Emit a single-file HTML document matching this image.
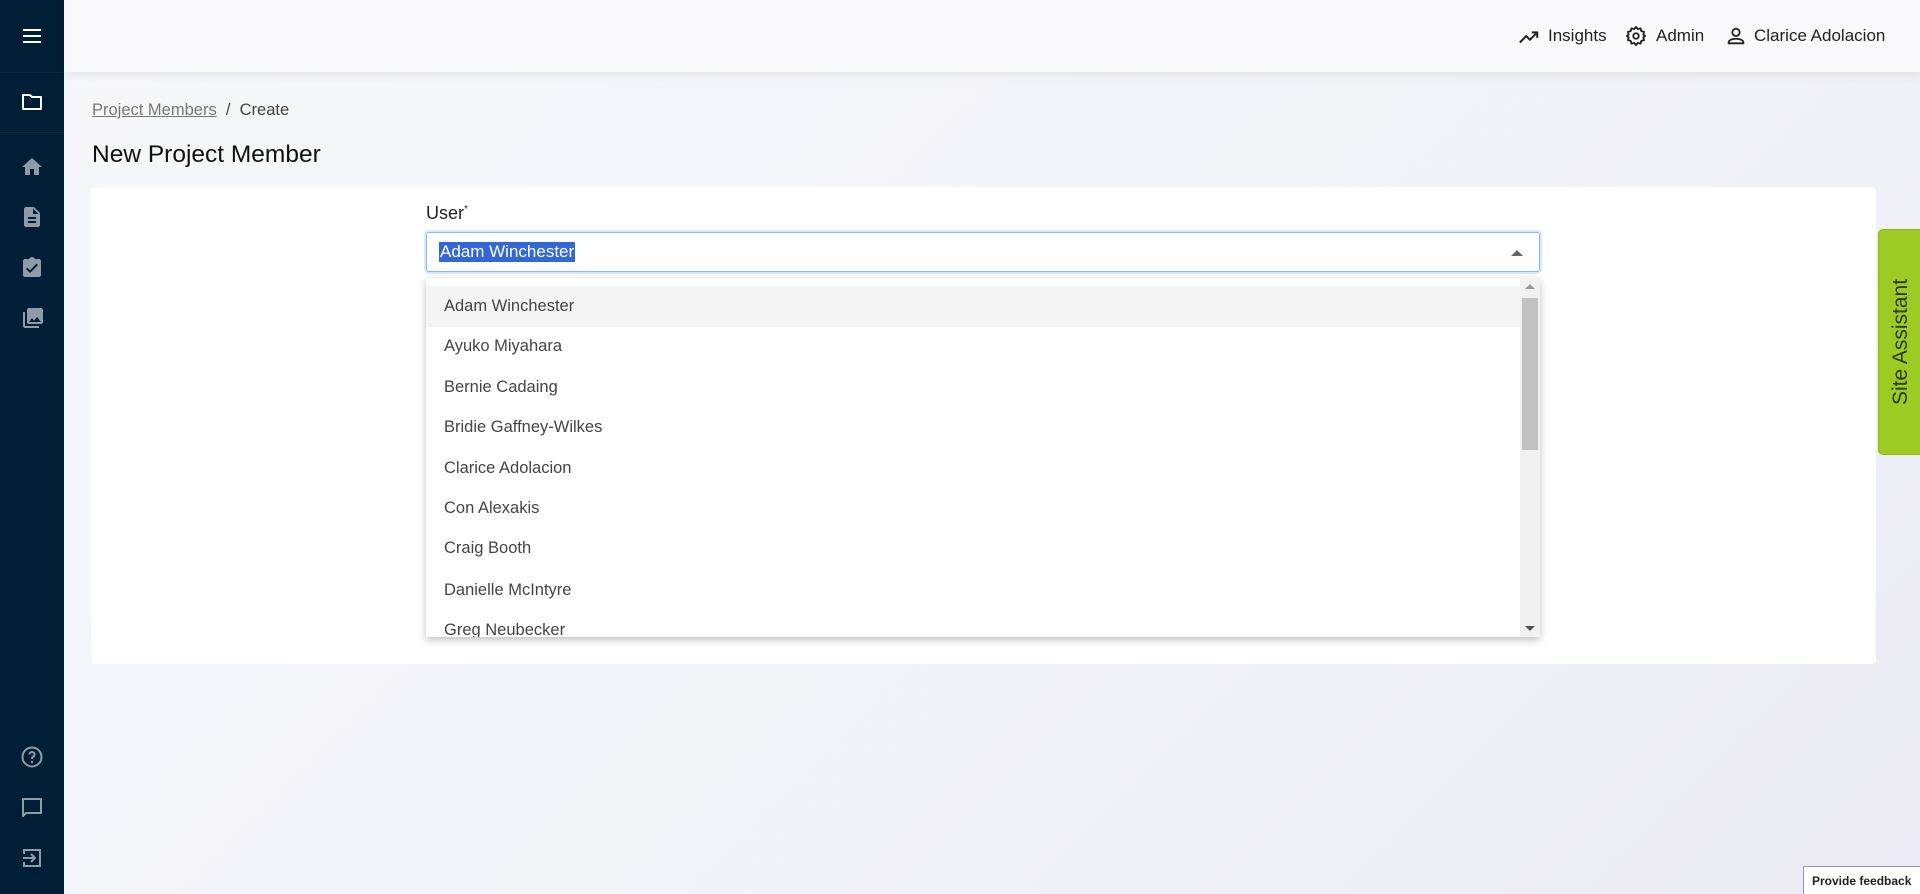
<!DOCTYPE html>
<html><head><meta charset="utf-8"><style>
*{box-sizing:border-box;margin:0;padding:0}
body{width:1920px;height:894px;overflow:hidden;font-family:"Liberation Sans",sans-serif;background:linear-gradient(135deg,#f6f7fb 0%,#f2f3f8 60%,#ebeaf4 100%);position:relative}
.side{position:absolute;left:0;top:0;width:64px;height:894px;background:#001e36}
.side .sep{position:absolute;left:0;width:64px;height:1px;background:#0b2a42}
.ic{position:absolute;left:20px}
.hdr{position:absolute;left:64px;top:0;right:0;height:72px;background:#f9f9fc;box-shadow:0 3px 10px rgba(0,0,0,.07)}
.hi{position:absolute;top:26px;font-size:17px;color:#222}
.crumb{position:absolute;left:92px;top:101px;font-size:16.5px;color:#444}
.crumb u{color:#777}
h1{position:absolute;left:92px;top:141px;font-size:24.5px;font-weight:normal;color:#111}
.card{position:absolute;left:91px;top:187px;width:1785px;height:477px;background:#fff;border-radius:4px}
.lbl{position:absolute;left:426px;top:203px;font-size:18px;color:#222}
.inp{position:absolute;left:426px;top:232px;width:1114px;height:40px;border:1px solid #86b7fe;border-radius:3px;box-shadow:0 0 0 2px #d8e8fe}
.inp span{position:absolute;left:12px;top:9px;background:#3367d6;color:#fff;font-size:17px;padding:0 1px;line-height:20px}
.inp i{position:absolute;right:16px;top:17px;border-left:6px solid transparent;border-right:6px solid transparent;border-bottom:6px solid #666}
.dd{position:absolute;left:426px;top:278px;width:1114px;height:359px;background:#fff;box-shadow:0 3px 8px rgba(0,0,0,.25);overflow:hidden}
.row{position:absolute;left:0;width:1094px;height:41px;font-size:16.5px;color:#444;padding-left:18px;line-height:41px}
.sb{position:absolute;right:0;top:0;width:20px;height:359px;background:#f1f1f1}
.sa{position:absolute;left:1878px;top:229px;width:46px;height:226px;background:#9ecb23;border-radius:5px 0 0 5px;border:1px solid #8cb81a}
.sa span{position:absolute;left:50%;top:50%;transform:translate(-50%,-50%) rotate(-90deg);font-size:21px;color:#2b3a10;white-space:nowrap}
.fb{position:absolute;left:1803px;top:866px;width:117px;height:28px;background:#fff;border:1px solid #999;border-bottom:none;border-right:none;font-size:12px;color:#222;padding:7px 0 0 8px;font-weight:bold}
</style></head><body>
<div class="side">
<div class="sep" style="top:72px"></div><div class="sep" style="top:132px"></div>
<svg class="ic" style="top:24px" width="24" height="24" viewBox="0 0 24 24"><path d="M3 6h18M3 12h18M3 18h18" stroke="#fff" stroke-width="2"/></svg>
<svg class="ic" style="top:90px" width="24" height="24" viewBox="0 0 24 24"><path d="M3 5h7l2 2h9v12H3z" fill="none" stroke="#fff" stroke-width="2" stroke-linejoin="round"/></svg>
<svg class="ic" style="top:155px" width="24" height="24" viewBox="0 0 24 24"><path d="M10 20v-6h4v6h5v-8h3L12 3 2 12h3v8z" fill="#8f9ca8"/></svg>
<svg class="ic" style="top:205px" width="24" height="24" viewBox="0 0 24 24"><path d="M14 2H6c-1 0-2 1-2 2v16c0 1 1 2 2 2h12c1 0 2-1 2-2V8zm2 16H8v-2h8zm0-4H8v-2h8zm-3-5V3.5L18.5 9z" fill="#8f9ca8"/></svg>
<svg class="ic" style="top:256px" width="24" height="24" viewBox="0 0 24 24"><path d="M19 3h-4.2C14.4 1.8 13.3 1 12 1s-2.4.8-2.8 2H5c-1.1 0-2 .9-2 2v14c0 1.1.9 2 2 2h14c1.1 0 2-.9 2-2V5c0-1.1-.9-2-2-2zm-9 14-4-4 1.4-1.4 2.6 2.6 6.6-6.6L18 9z" fill="#8f9ca8"/></svg>
<svg class="ic" style="top:306px" width="26" height="24" viewBox="0 0 24 24"><path d="M22 16V4c0-1.1-.9-2-2-2H8c-1.1 0-2 .9-2 2v12c0 1.1.9 2 2 2h12c1.1 0 2-.9 2-2zm-11-4 2 2.7 3-3.7 4 5H8zM2 6v14c0 1.1.9 2 2 2h14v-2H4V6z" fill="#8f9ca8"/></svg>
<svg class="ic" style="top:745px" width="24" height="24" viewBox="0 0 24 24"><circle cx="12" cy="12" r="9.5" fill="none" stroke="#8f9ca8" stroke-width="2"/><path d="M9.5 9.5a2.5 2.5 0 1 1 3.5 2.3c-.7.4-1 .9-1 1.7v.5" fill="none" stroke="#8f9ca8" stroke-width="2"/><circle cx="12" cy="17" r="1.2" fill="#8f9ca8"/></svg>
<svg class="ic" style="top:796px" width="24" height="24" viewBox="0 0 24 24"><path d="M3 3h18v14H6l-3 3z" fill="none" stroke="#8f9ca8" stroke-width="2" stroke-linejoin="round"/></svg>
<svg class="ic" style="top:846px" width="24" height="24" viewBox="0 0 24 24"><path d="M4 8V4h16v16H4v-4M3 12h12M11 8l4 4-4 4" fill="none" stroke="#8f9ca8" stroke-width="2"/></svg>
</div>
<div class="hdr">
<svg style="position:absolute;left:1454px;top:26px" width="22" height="22" viewBox="0 0 24 24"><path d="M2 18l7-7 4 4 8-8M15 7h6v6" fill="none" stroke="#222" stroke-width="2.2"/></svg>
<div class="hi" style="left:1484px">Insights</div>
<svg style="position:absolute;left:1561px;top:25px" width="22" height="22" viewBox="0 0 24 24"><circle cx="12" cy="12" r="3" fill="none" stroke="#222" stroke-width="2"/><path d="M12 2l2 2.5 3-.8.8 3 3 .8-.8 3L22 12l-2 1.5.8 3-3 .8-.8 3-3-.8L12 22l-2-2.5-3 .8-.8-3-3-.8.8-3L2 12l2-1.5-.8-3 3-.8.8-3 3 .8z" fill="none" stroke="#222" stroke-width="2" stroke-linejoin="round"/></svg>
<div class="hi" style="left:1592px">Admin</div>
<svg style="position:absolute;left:1661px;top:25px" width="22" height="22" viewBox="0 0 24 24"><circle cx="12" cy="8" r="4" fill="none" stroke="#222" stroke-width="2"/><path d="M4 20v-1c0-2.5 4-4 8-4s8 1.5 8 4v1z" fill="none" stroke="#222" stroke-width="2"/></svg>
<div class="hi" style="left:1690px">Clarice Adolacion</div>
</div>
<div class="crumb"><u>Project Members</u> &nbsp;/&nbsp; Create</div>
<h1>New Project Member</h1>
<div class="card"></div>
<div class="lbl">User<sup style="font-size:10px">*</sup></div>
<div class="inp"><span>Adam Winchester</span><i></i></div>
<div class="dd">
<div class="row" style="top:8px;background:#f4f4f4">Adam Winchester</div>
<div class="row" style="top:48px">Ayuko Miyahara</div>
<div class="row" style="top:89px">Bernie Cadaing</div>
<div class="row" style="top:129px">Bridie Gaffney-Wilkes</div>
<div class="row" style="top:170px">Clarice Adolacion</div>
<div class="row" style="top:210px">Con Alexakis</div>
<div class="row" style="top:250px">Craig Booth</div>
<div class="row" style="top:292px">Danielle McIntyre</div>
<div class="row" style="top:332px">Greg Neubecker</div>
<div class="sb"><div style="position:absolute;left:2px;top:20px;width:16px;height:152px;background:#c1c1c1"></div>
<i style="position:absolute;left:5px;top:6px;border-left:5px solid transparent;border-right:5px solid transparent;border-bottom:5px solid #999"></i>
<i style="position:absolute;left:5px;bottom:6px;border-left:5px solid transparent;border-right:5px solid transparent;border-top:5px solid #555"></i></div>
</div>
<div class="sa"><span>Site Assistant</span></div>
<div class="fb">Provide feedback</div>
</body></html>
